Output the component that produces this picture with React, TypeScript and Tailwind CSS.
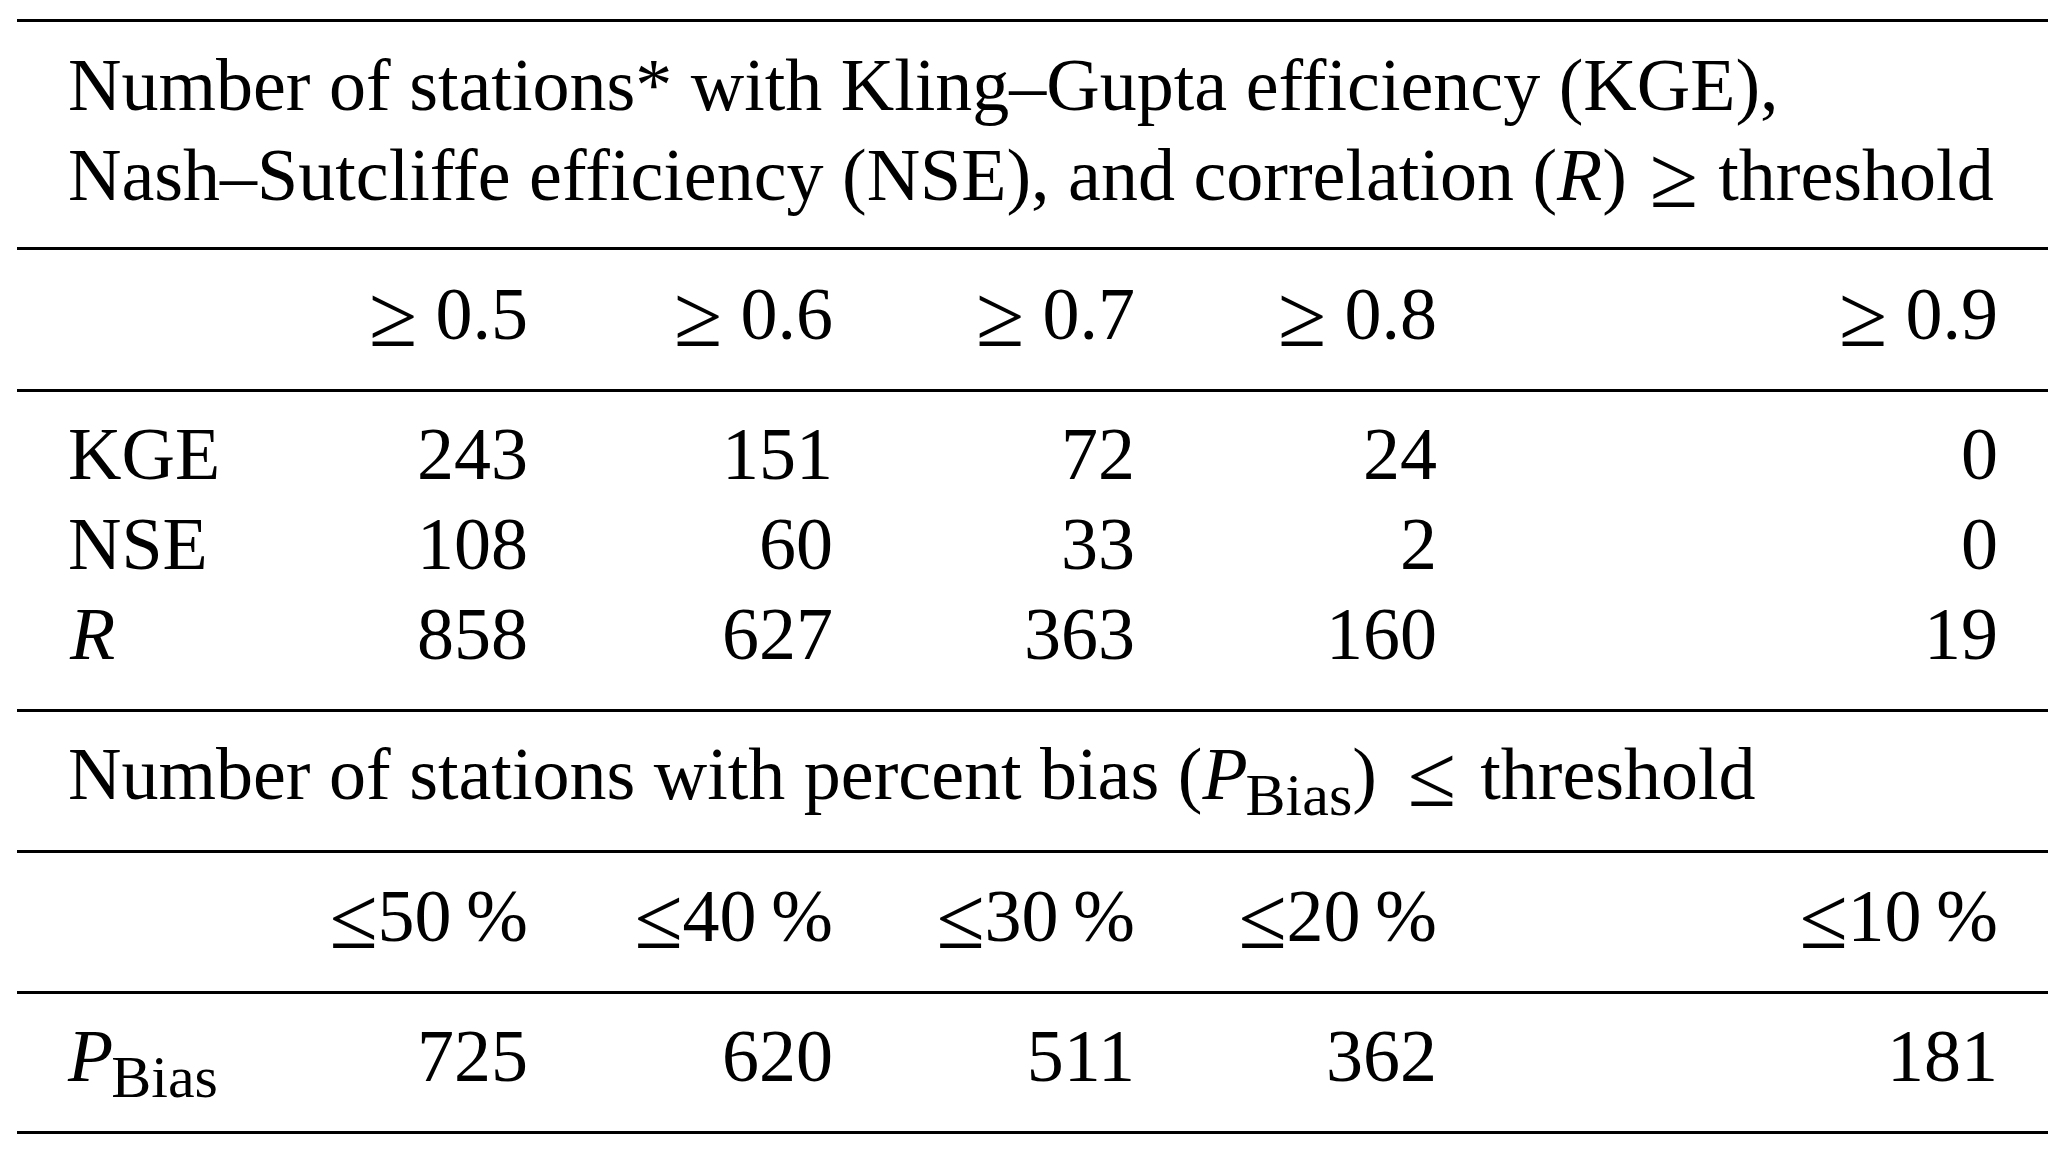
const thresholds = ["0.5", "0.6", "0.7", "0.8", "0.9"];
const biasThresholds = ["50", "40", "30", "20", "10"];

const metricRows = [
  { label: "KGE", italic: false, values: [243, 151, 72, 24, 0] },
  { label: "NSE", italic: false, values: [108, 60, 33, 2, 0] },
  { label: "R", italic: true, values: [858, 627, 363, 160, 19] },
];

const biasValues = [725, 620, 511, 362, 181];

const grid = "grid grid-cols-[200px_260px_305px_302px_302px_561px]";

// relation signs are drawn a bit larger than the text, like the math font
const Rel = ({ children, className = "" }: { children: string; className?: string }) => (
  <span className={`relative top-[7px] text-[88px] leading-[0] ${className}`}>{children}</span>
);

const PBias = () => (
  <span className="whitespace-nowrap">
    <span className="italic">P</span>
    <span className="relative top-[16px] -ml-[2px] text-[60px] leading-[0]">Bias</span>
  </span>
);

const App = () => {
  return (
    <div className="min-h-screen bg-white text-black">
      <div className="ml-[17px] w-[2031px] pt-[19px] font-['Liberation_Serif','Times_New_Roman',serif] text-[74px] leading-[90px]">
        {/* first block: KGE / NSE / R */}
        <div className="border-t-[3px] border-black pl-[51px] pr-[50px] pt-[18px] pb-[27px]">
          <div className="whitespace-nowrap">Number of stations* with Kling–Gupta efficiency (KGE),</div>
          <div className="whitespace-nowrap">
            Nash–Sutcliffe efficiency (NSE), and correlation (<span className="italic">R</span>){" "}
            <Rel className="ml-[4px] mr-[2px]">≥</Rel> threshold
          </div>
        </div>

        <div className={`${grid} border-t-[3px] border-black pl-[51px] pr-[50px] pt-[19px] pb-[30px]`}>
          <div></div>
          {thresholds.map((t) => (
            <div key={t} className="text-right whitespace-nowrap">
              <Rel>≥</Rel> {t}
            </div>
          ))}
        </div>

        <div className="border-t-[3px] border-black pl-[51px] pr-[50px] pt-[17px] pb-[30px]">
          {metricRows.map((row) => (
            <div key={row.label} className={grid}>
              <div className={row.italic ? "italic pl-[2px]" : ""}>{row.label}</div>
              {row.values.map((v, i) => (
                <div key={i} className="text-right">
                  {v}
                </div>
              ))}
            </div>
          ))}
        </div>

        {/* second block: percent bias */}
        <div className="border-t-[3px] border-black pl-[51px] pr-[50px] pt-[17px] pb-[31px]">
          <div className="whitespace-nowrap">
            Number of stations with percent bias (<PBias />){" "}
            <Rel className="ml-[12px] mr-[6px]">≤</Rel> threshold
          </div>
        </div>

        <div className={`${grid} border-t-[3px] border-black pl-[51px] pr-[50px] pt-[18px] pb-[30px]`}>
          <div></div>
          {biasThresholds.map((t) => (
            <div key={t} className="text-right whitespace-nowrap">
              <Rel>≤</Rel>
              {t}&#8201;%
            </div>
          ))}
        </div>

        <div className={`${grid} border-t-[3px] border-b-[3px] border-black pl-[51px] pr-[50px] pt-[17px] pb-[30px]`}>
          <div>
            <PBias />
          </div>
          {biasValues.map((v) => (
            <div key={v} className="text-right">
              {v}
            </div>
          ))}
        </div>
      </div>
    </div>
  );
};

export default App;
